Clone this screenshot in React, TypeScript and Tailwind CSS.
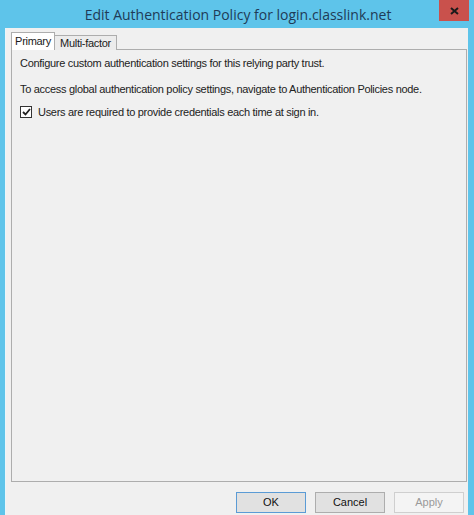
export default function App() {
  const font = { fontFamily: '"Liberation Sans", Arial, sans-serif' };
  return (
    <div className="w-[474px] h-[515px] bg-[#5ec4ea] flex flex-col overflow-hidden" style={font}>
      {/* title bar */}
      <div className="relative h-[28px] flex items-center justify-center shrink-0">
        <span className="text-[14px] text-[#1f3b57] font-['Open_Sans',sans-serif] pl-[2px]">
          Edit Authentication Policy for login.classlink.net
        </span>
        <div className="absolute right-[5px] top-0 w-[30px] h-[21px] bg-[#c9514c] flex items-center justify-center">
          <svg width="9" height="8" viewBox="0 0 9 8">
            <path d="M1 1 L8 7 M8 1 L1 7" stroke="#1a1a1a" strokeWidth="2" />
          </svg>
        </div>
      </div>
      {/* body */}
      <div className="flex-1 ml-[5px] mr-[6px] bg-[#f0f0f0] border-l border-[#e8f6fb] flex flex-col pl-[5px] pr-[1px] pt-[4px]">
        {/* tabs */}
        <div className="flex items-end h-[18px] relative z-10">
          <div className="w-[44px] h-[18px] bg-[#ffffff] border border-[#adadad] border-b-0 text-[11px] tracking-[-0.3px] text-[#1a1a1a] flex items-center justify-center">
            Primary
          </div>
          <div className="w-[62px] h-[15px] bg-[#ececec] border border-[#adadad] border-l-0 border-b-0 text-[11px] tracking-[-0.3px] text-[#1a1a1a] flex items-center justify-center">
            Multi-factor
          </div>
        </div>
        {/* panel */}
        <div className="h-[433px] -mt-px border border-[#adadad] bg-[#f0f0f0] px-[8px] pt-[6px] text-[11px] tracking-[-0.3px] text-[#222]">
          <p className="leading-[14px]">Configure custom authentication settings for this relying party trust.</p>
          <p className="leading-[14px] mt-[12px]">To access global authentication policy settings, navigate to Authentication Policies node.</p>
          <div className="flex items-center gap-[6px] mt-[8px]">
            <div className="w-[12px] h-[12px] border border-[#333] bg-white flex items-center justify-center">
              <svg width="9" height="8" viewBox="0 0 9 8">
                <path d="M1 4 L3.5 6.5 L8 1" stroke="#222" strokeWidth="1.8" fill="none" />
              </svg>
            </div>
            <span>Users are required to provide credentials each time at sign in.</span>
          </div>
        </div>
        {/* buttons */}
        <div className="flex justify-end gap-[9px] mt-[10px] pr-[3px]">
          <button className="w-[70px] h-[21px] border border-[#5b9bd5] bg-[#e1e1e1] text-[11px] text-[#111]">OK</button>
          <button className="w-[70px] h-[21px] border border-[#adadad] bg-[#e1e1e1] text-[11px] text-[#111]">Cancel</button>
          <button className="w-[70px] h-[21px] border border-[#cfcfcf] bg-[#f4f4f4] text-[11px] text-[#9a9a9a]">Apply</button>
        </div>
      </div>
    </div>
  );
}
